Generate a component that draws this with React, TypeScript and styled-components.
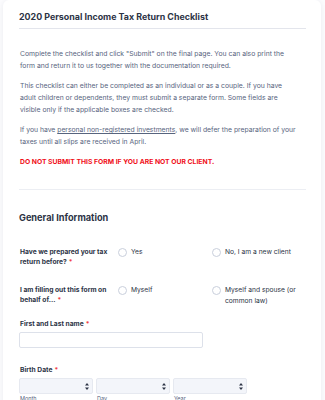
import styled, { createGlobalStyle } from "styled-components";

const GlobalStyle = createGlobalStyle`
  html, body {
    margin: 0;
    padding: 0;
    background: #fbfbfd;
    font-family: Inter, "Noto Sans", sans-serif;
  }
`;

const Page = styled.div`
  padding: 0 4px 0 3px;
`;

const Card = styled.div`
  background: #fff;
  border-radius: 6px 6px 0 0;
  box-shadow: 0 1px 5px rgba(42, 47, 80, 0.08);
  padding: 11px 15px 0 16px;
  color: #2c3345;
`;

const Header = styled.div`
  padding: 0 0 6px;
  border-bottom: 1px solid #e3e5ec;
`;

const Title = styled.h1`
  margin: 0;
  font-size: 8.9px;
  line-height: 11px;
  font-weight: 700;
  color: #2c3345;
`;

const Intro = styled.div`
  padding: 19px 0 13px 1px;
  border-bottom: 1px solid #eceef3;
`;

const Para = styled.p<{ $alert?: boolean }>`
  margin: 0 0 8px;
  font-size: 6.8px;
  line-height: 12px;
  color: ${(p) => (p.$alert ? "#f0101a" : "#57647e")};
  font-weight: ${(p) => (p.$alert ? 700 : 400)};
`;

const Link = styled.span`
  text-decoration: underline;
`;

const Section = styled.h2`
  margin: 0;
  padding: 22px 0 0;
  font-size: 9.2px;
  line-height: 11px;
  font-weight: 700;
  color: #2c3345;
`;

const QuestionRow = styled.div<{ $top: number }>`
  display: grid;
  grid-template-columns: 98px 94px 1fr;
  padding: ${(p) => p.$top}px 0 0 1px;
  align-items: start;
`;

const Label = styled.div`
  font-size: 6.7px;
  line-height: 10px;
  font-weight: 700;
  color: #2c3345;
  padding-right: 3px;
`;

const Req = styled.span`
  color: #f23a3c;
  margin-left: 2px;
`;

const Option = styled.label`
  display: flex;
  align-items: flex-start;
  gap: 4px;
  font-size: 6.7px;
  line-height: 11px;
  color: #2c3345;
`;

const Radio = styled.span`
  flex: none;
  width: 7px;
  height: 7px;
  border: 1px solid #c9cfdc;
  border-radius: 50%;
  margin-top: 1px;
  background: #fff;
`;

const Field = styled.div<{ $top: number }>`
  padding: ${(p) => p.$top}px 0 0;
`;

const FieldLabel = styled.div`
  font-size: 6.7px;
  line-height: 10px;
  font-weight: 700;
  padding-left: 1px;
  margin-bottom: 3px;
  color: #2c3345;
`;

const TextInput = styled.div`
  width: 184px;
  height: 16px;
  border: 1px solid #dde1ea;
  border-radius: 2px;
  background: #fff;
  box-sizing: border-box;
`;

const SelectRow = styled.div`
  display: flex;
  gap: 3px;
`;

const SelectCol = styled.div`
  display: flex;
  flex-direction: column;
`;

const Select = styled.div`
  width: 74px;
  height: 16px;
  border: 1px solid #e6e9f0;
  border-radius: 2px;
  background: #f3f5fa;
  display: flex;
  align-items: center;
  justify-content: flex-end;
  padding-right: 3px;
  box-sizing: border-box;
`;

const SubLabel = styled.div`
  font-size: 5.5px;
  line-height: 8px;
  color: #57647e;
  padding: 1px 0 0 1px;
`;

const Arrows = () => (
  <svg width="4" height="7" viewBox="0 0 4 7">
    <path d="M2 0 L4 2.6 H0 Z M2 7 L4 4.4 H0 Z" fill="#2c3345" />
  </svg>
);

const dateParts = ["Month", "Day", "Year"];

export default function App() {
  return (
    <>
      <GlobalStyle />
      <Page>
        <Card>
          <Header>
            <Title>2020 Personal Income Tax Return Checklist</Title>
          </Header>
          <Intro>
            <Para>
              Complete the checklist and click "Submit" on the final page. You can also print the
              <br />
              form and return it to us together with the documentation required.
            </Para>
            <Para>
              This checklist can either be completed as an individual or as a couple. If you have
              <br />
              adult children or dependents, they must submit a separate form. Some fields are
              <br />
              visible only if the applicable boxes are checked.
            </Para>
            <Para>
              If you have <Link>personal non-registered investments</Link>, we will defer the
              preparation of your
              <br />
              taxes until all slips are received in April.
            </Para>
            <Para $alert>DO NOT SUBMIT THIS FORM IF YOU ARE NOT OUR CLIENT.</Para>
          </Intro>
          <Section>General Information</Section>
          <QuestionRow $top={24}>
            <Label>
              Have we prepared your tax return before?<Req>*</Req>
            </Label>
            <Option>
              <Radio />
              Yes
            </Option>
            <Option>
              <Radio />
              No, I am a new client
            </Option>
          </QuestionRow>
          <QuestionRow $top={18}>
            <Label>
              I am filling out this form on behalf of...<Req>*</Req>
            </Label>
            <Option>
              <Radio />
              Myself
            </Option>
            <Option>
              <Radio />
              Myself and spouse (or common law)
            </Option>
          </QuestionRow>
          <Field $top={12}>
            <FieldLabel>
              First and Last name<Req>*</Req>
            </FieldLabel>
            <TextInput />
          </Field>
          <Field $top={17}>
            <FieldLabel>
              Birth Date<Req>*</Req>
            </FieldLabel>
            <SelectRow>
              {dateParts.map((part) => (
                <SelectCol key={part}>
                  <Select>
                    <Arrows />
                  </Select>
                  <SubLabel>{part}</SubLabel>
                </SelectCol>
              ))}
            </SelectRow>
          </Field>
        </Card>
      </Page>
    </>
  );
}
